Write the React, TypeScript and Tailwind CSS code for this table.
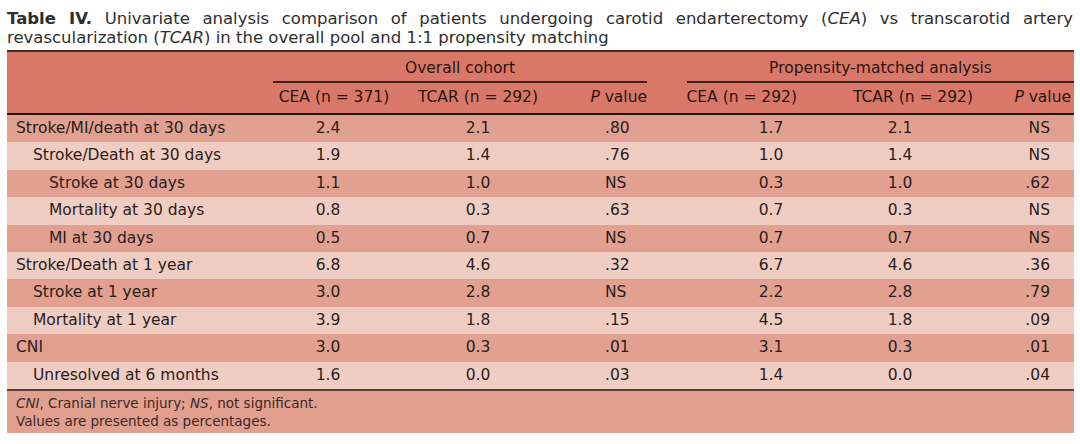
const rows: { label: string; indent: number; v: string[] }[] = [
  { label: "Stroke/MI/death at 30 days", indent: 0, v: ["2.4", "2.1", ".80", "1.7", "2.1", "NS"] },
  { label: "Stroke/Death at 30 days", indent: 1, v: ["1.9", "1.4", ".76", "1.0", "1.4", "NS"] },
  { label: "Stroke at 30 days", indent: 2, v: ["1.1", "1.0", "NS", "0.3", "1.0", ".62"] },
  { label: "Mortality at 30 days", indent: 2, v: ["0.8", "0.3", ".63", "0.7", "0.3", "NS"] },
  { label: "MI at 30 days", indent: 2, v: ["0.5", "0.7", "NS", "0.7", "0.7", "NS"] },
  { label: "Stroke/Death at 1 year", indent: 0, v: ["6.8", "4.6", ".32", "6.7", "4.6", ".36"] },
  { label: "Stroke at 1 year", indent: 1, v: ["3.0", "2.8", "NS", "2.2", "2.8", ".79"] },
  { label: "Mortality at 1 year", indent: 1, v: ["3.9", "1.8", ".15", "4.5", "1.8", ".09"] },
  { label: "CNI", indent: 0, v: ["3.0", "0.3", ".01", "3.1", "0.3", ".01"] },
  { label: "Unresolved at 6 months", indent: 1, v: ["1.6", "0.0", ".03", "1.4", "0.0", ".04"] },
];

const indentCls = ["pl-[9px]", "pl-[26px]", "pl-[42px]"];

export default function App() {
  return (
    <div
      className="w-[1080px] h-[444px] bg-white text-[#2b1d1b] overflow-hidden"
      style={{ fontFamily: '"DejaVu Sans", "Open Sans", sans-serif' }}
    >
      {/* Caption */}
      <p className="pl-[7px] pr-[7px] pt-[9px] text-[16.5px] leading-[19px] text-justify text-[#2e2e2e]">
        <b className="font-bold">Table IV.</b> Univariate analysis comparison of patients undergoing carotid
        endarterectomy (<i>CEA</i>) vs transcarotid artery revascularization (<i>TCAR</i>) in the overall pool and
        1:1 propensity matching
      </p>

      {/* Table */}
      <div className="mx-[7px] mt-[3px] w-[1067px] text-[15.5px]">
        <div className="bg-[#d97868] border-t-[2px] border-[#4a2a24] text-[#2a1512]">
          <div className="flex h-[31px] items-end">
            <div className="w-[266px]" />
            <div className="w-[374px] border-b-[2px] border-[#3a1f1a] text-center pb-[1px]">Overall cohort</div>
            <div className="w-[40px]" />
            <div className="w-[387px] border-b-[2px] border-[#3a1f1a] text-center pb-[1px]">
              Propensity-matched analysis
            </div>
          </div>
          <div className="flex h-[30px] items-center">
            <div className="w-[266px]" />
            <div className="w-[122px] text-center">CEA (n = 371)</div>
            <div className="w-[166px] text-center">TCAR (n = 292)</div>
            <div className="w-[86px] text-right"><i>P</i> value</div>
            <div className="w-[150px] text-right">CEA (n = 292)</div>
            <div className="w-[176px] text-right">TCAR (n = 292)</div>
            <div className="w-[101px] text-right pr-[3px]"><i>P</i> value</div>
          </div>
        </div>
        <div className="border-t-[2px] border-[#241412]">
          {rows.map((r, i) => (
            <div
              key={r.label}
              className={`flex h-[27.4px] items-center ${i % 2 === 0 ? "bg-[#e2a190]" : "bg-[#f0cdc3]"}`}
            >
              <div className={`w-[266px] ${indentCls[r.indent]}`}>{r.label}</div>
              <div className="w-[110px] text-center">{r.v[0]}</div>
              <div className="w-[190px] text-center">{r.v[1]}</div>
              <div className="w-[154px] pl-[32px]">{r.v[2]}</div>
              <div className="w-[88px] text-center">{r.v[3]}</div>
              <div className="w-[170px] text-center">{r.v[4]}</div>
              <div className="w-[65px] text-right">{r.v[5]}</div>
            </div>
          ))}
        </div>
        <div className="border-t-[2px] border-[#5a3a34] bg-[#e19f8f] h-[44px] pl-[9px] pt-[3px] text-[13.5px] leading-[18px] text-[#3a2a27]">
          <div>
            <i>CNI</i>, Cranial nerve injury; <i>NS</i>, not significant.
          </div>
          <div>Values are presented as percentages.</div>
        </div>
      </div>
    </div>
  );
}
